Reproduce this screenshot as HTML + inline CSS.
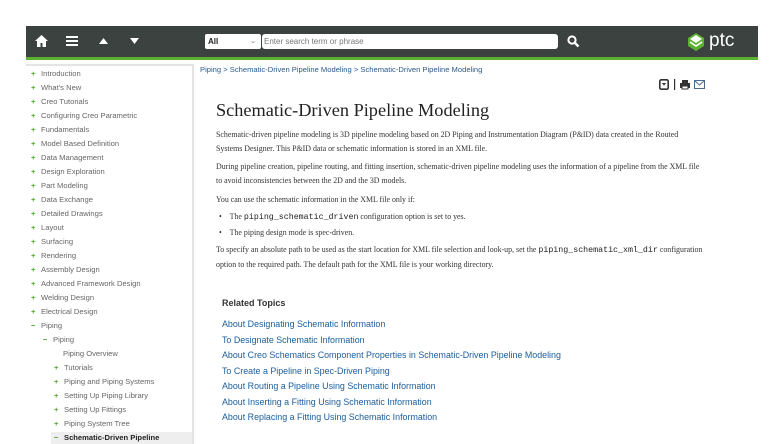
<!DOCTYPE html>
<html><head><meta charset="utf-8"><style>
*{margin:0;padding:0;box-sizing:border-box}
body{width:784px;height:441px;overflow:hidden;background:#fff;position:relative;font-family:"Liberation Sans",Arial,sans-serif}
.hdr{position:absolute;left:26px;top:26px;width:732px;height:31px;background:#3b4240}
.grn{position:absolute;left:26px;top:57px;width:732px;height:3px;background:#5cb230}
.sel{position:absolute;left:205px;top:34px;width:56px;height:15px;background:#fff;border-radius:2px;font-size:8px;font-weight:bold;padding:3px 0 0 3px;color:#222}
.sel span{position:absolute;right:5px;top:3px;font-weight:normal;color:#777;font-size:7px}
.srch{position:absolute;left:262px;top:34px;width:296px;height:15px;background:#fff;border-radius:3px;font-size:8px;color:#777;padding:3px 0 0 2px}
.nav{position:absolute;left:26px;top:64px;width:168px;height:380px;border-top:2px solid #e4e4e4;border-right:2px solid #e4e4e4}
.nav div{position:absolute;font-size:7.6px;color:#666;white-space:nowrap;height:12px;line-height:12px}
.nav b{color:#4a9e2a;font-weight:bold;display:inline-block;width:10px}
.cur{background:#eee;font-weight:bold;color:#222 !important}
.bc{position:absolute;left:200px;top:65px;font-size:7.6px;color:#2a5a8a}
h1{position:absolute;left:216px;top:100px;font-family:"Liberation Serif",serif;font-weight:normal;font-size:18.3px;color:#222}
.txt{position:absolute;left:216px;width:560px;white-space:nowrap;font-family:"Liberation Serif",serif;font-size:7.9px;color:#333;line-height:14px}
.mono{font-family:"Liberation Mono",monospace;font-size:8.3px;color:#222}
.rt{position:absolute;left:222px;top:298px;font-size:9px;font-weight:bold;color:#333}
.lk{position:absolute;left:222px;font-size:8.9px;color:#1a5d9c;white-space:nowrap}
</style></head><body>
<div class="hdr">
<svg style="position:absolute;left:9px;top:9px" width="13" height="12" viewBox="0 0 13 12"><path d="M6.5 0L0 6h2v6h3.5V8h2v4H11V6h2z" fill="#fff"/></svg>
<svg style="position:absolute;left:40px;top:10px" width="12" height="10"><rect y="0" width="12" height="2" fill="#fff"/><rect y="4" width="12" height="2" fill="#fff"/><rect y="8" width="12" height="2" fill="#fff"/></svg>
<svg style="position:absolute;left:73px;top:12px" width="9" height="6"><path d="M0 6L4.5 0 9 6z" fill="#fff"/></svg>
<svg style="position:absolute;left:104px;top:12px" width="9" height="6"><path d="M0 0L4.5 6 9 0z" fill="#fff"/></svg>
<svg style="position:absolute;left:541px;top:9px" width="13" height="13"><circle cx="5" cy="5" r="3.6" fill="none" stroke="#fff" stroke-width="2"/><path d="M7.5 7.5L11.5 11.5" stroke="#fff" stroke-width="2.4"/></svg>
<svg style="position:absolute;left:661px;top:6px" width="18" height="20" viewBox="0 0 18 20"><path d="M9 1L1 6v8l8 5 8-5V6z" fill="#5cb230"/><path d="M9 3L3 7l6 4 6-4z" fill="#fff"/><path d="M3 10l6 4 6-4" fill="none" stroke="#fff" stroke-width="1.6"/></svg>
<div style="position:absolute;left:683px;top:4px;font-size:19px;color:#fff">ptc</div>
</div>
<div class="grn"></div>
<div class="sel">All<span>⌄</span></div>
<div class="srch">Enter search term or phrase</div>
<div class="nav">
<div style="left:5px;top:2px"><b>+</b>Introduction</div>
<div style="left:5px;top:16px"><b>+</b>What's New</div>
<div style="left:5px;top:30px"><b>+</b>Creo Tutorials</div>
<div style="left:5px;top:44px"><b>+</b>Configuring Creo Parametric</div>
<div style="left:5px;top:58px"><b>+</b>Fundamentals</div>
<div style="left:5px;top:72px"><b>+</b>Model Based Definition</div>
<div style="left:5px;top:86px"><b>+</b>Data Management</div>
<div style="left:5px;top:100px"><b>+</b>Design Exploration</div>
<div style="left:5px;top:114px"><b>+</b>Part Modeling</div>
<div style="left:5px;top:128px"><b>+</b>Data Exchange</div>
<div style="left:5px;top:142px"><b>+</b>Detailed Drawings</div>
<div style="left:5px;top:156px"><b>+</b>Layout</div>
<div style="left:5px;top:170px"><b>+</b>Surfacing</div>
<div style="left:5px;top:184px"><b>+</b>Rendering</div>
<div style="left:5px;top:198px"><b>+</b>Assembly Design</div>
<div style="left:5px;top:212px"><b>+</b>Advanced Framework Design</div>
<div style="left:5px;top:226px"><b>+</b>Welding Design</div>
<div style="left:5px;top:240px"><b>+</b>Electrical Design</div>
<div style="left:5px;top:254px"><b>−</b>Piping</div>
<div style="left:17px;top:268px"><b>−</b>Piping</div>
<div style="left:37px;top:282px">Piping Overview</div>
<div style="left:28px;top:296px"><b>+</b>Tutorials</div>
<div style="left:28px;top:310px"><b>+</b>Piping and Piping Systems</div>
<div style="left:28px;top:324px"><b>+</b>Setting Up Piping Library</div>
<div style="left:28px;top:338px"><b>+</b>Setting Up Fittings</div>
<div style="left:28px;top:352px"><b>+</b>Piping System Tree</div>
<div class="cur" style="left:25px;top:366px;width:141px;padding-left:3px"><b>−</b>Schematic-Driven Pipeline</div>
</div>
<div class="bc">Piping &gt; Schematic-Driven Pipeline Modeling &gt; Schematic-Driven Pipeline Modeling</div>
<svg style="position:absolute;left:659px;top:79px" width="52" height="11"><rect x="0.8" y="0.8" width="8.4" height="9.4" rx="1.5" fill="none" stroke="#333" stroke-width="1.6"/><path d="M2.8 4h4.4L5 6.6z" fill="#333"/><rect x="15" y="0" width="1.2" height="11" fill="#333"/><path d="M23 1h6v3h-6z M21 4h10v5h-10z" fill="#333"/><rect x="23" y="7" width="6" height="3" fill="#fff" stroke="#333"/><rect x="35.5" y="1.5" width="10" height="8" fill="none" stroke="#4a6a8a"/><path d="M35.5 1.5l5 4.5 5-4.5" fill="none" stroke="#4a6a8a"/></svg>
<h1>Schematic-Driven Pipeline Modeling</h1>
<div class="txt" style="top:128px">Schematic-driven pipeline modeling is 3D pipeline modeling based on 2D Piping and Instrumentation Diagram (P&amp;ID) data created in the Routed<br>Systems Designer. This P&amp;ID data or schematic information is stored in an XML file.</div>
<div class="txt" style="top:160px">During pipeline creation, pipeline routing, and fitting insertion, schematic-driven pipeline modeling uses the information of a pipeline from the XML file<br>to avoid inconsistencies between the 2D and the 3D models.</div>
<div class="txt" style="top:193px">You can use the schematic information in the XML file only if:</div>
<div class="txt" style="top:210px;left:219px">•&nbsp;&nbsp;&nbsp;&nbsp;The <span class="mono">piping_schematic_driven</span> configuration option is set to yes.</div>
<div class="txt" style="top:226px;left:219px">•&nbsp;&nbsp;&nbsp;&nbsp;The piping design mode is spec-driven.</div>
<div class="txt" style="top:243px">To specify an absolute path to be used as the start location for XML file selection and look-up, set the <span class="mono">piping_schematic_xml_dir</span> configuration<br>option to the required path. The default path for the XML file is your working directory.</div>
<div class="rt">Related Topics</div>
<div class="lk" style="top:319px">About Designating Schematic Information</div>
<div class="lk" style="top:335px">To Designate Schematic Information</div>
<div class="lk" style="top:350px">About Creo Schematics Component Properties in Schematic-Driven Pipeline Modeling</div>
<div class="lk" style="top:366px">To Create a Pipeline in Spec-Driven Piping</div>
<div class="lk" style="top:381px">About Routing a Pipeline Using Schematic Information</div>
<div class="lk" style="top:397px">About Inserting a Fitting Using Schematic Information</div>
<div class="lk" style="top:412px">About Replacing a Fitting Using Schematic Information</div>
</body></html>
